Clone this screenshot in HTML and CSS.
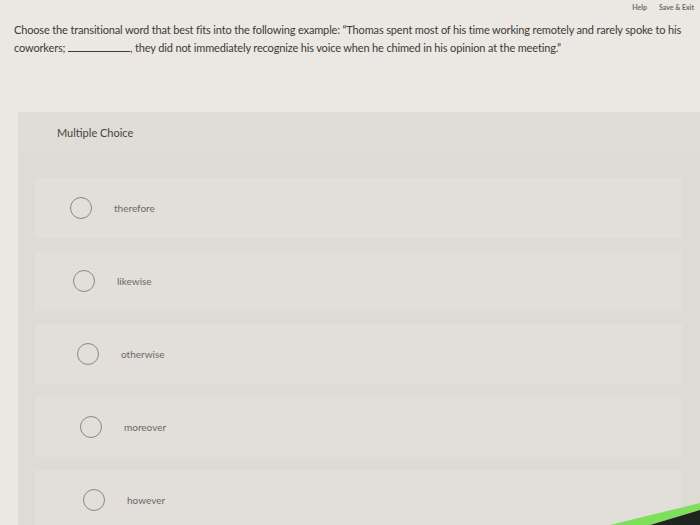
FILE: index.html
```html
<!DOCTYPE html>
<html>
<head>
	<title>Multiple Choice</title>
	<link rel="stylesheet" href="styles.css">
</head>
<body>
   <div class="topbar">
      <span class="link">Help</span>
      <span class="link">Save &amp; Exit</span>
   </div>
   <div class="question">
      Choose the transitional word that best fits into the following example: “Thomas spent most of his time working remotely and rarely spoke to his<br>
      coworkers; <span class="blank"></span>, they did not immediately recognize his voice when he chimed in his opinion at the meeting.”
   </div>
   <div class="card">
      <div class="card-head">Multiple Choice</div>
      <div class="options">
         <div class="option"><span class="radio"></span><span class="label">therefore</span></div>
         <div class="option"><span class="radio"></span><span class="label">likewise</span></div>
         <div class="option"><span class="radio"></span><span class="label">otherwise</span></div>
         <div class="option"><span class="radio"></span><span class="label">moreover</span></div>
         <div class="option"><span class="radio"></span><span class="label">however</span></div>
      </div>
   </div>
   <svg class="stripe" width="90" height="24" viewBox="0 0 90 24">
      <polygon points="0,24 90,2 90,9 40,24" fill="#7ee05a"/>
      <polygon points="40,24 90,9 90,24" fill="#1d2420"/>
   </svg>
</body>
</html>
```

FILE: styles.css
```css
body{
	margin: 0;
	background: #ebe7e2;
	font-family: Lato, "Open Sans", sans-serif;
	color: #3b3a39;
	height: 525px;
	overflow: hidden;
	position: relative;
}
.topbar{
	display: flex;
	justify-content: flex-end;
	gap: 12px;
	padding: 3px 6px 0 0;
	height: 12px;
	font-size: 7px;
}
.link{
	color: #6f6c69;
	font-weight: bold;
}
.question{
	padding: 6px 0 0 14px;
	font-size: 11px;
	line-height: 18px;
	letter-spacing: -0.15px;
	white-space: nowrap;
}
.blank{
	display: inline-block;
	width: 62px;
	border-bottom: 1px solid #3b3a39;
	vertical-align: baseline;
}
.card{
	margin: 55px 0 0 18px;
	background: #dedad4;
	height: 420px;
}
.card-head{
	height: 40px;
	padding-left: 39px;
	display: flex;
	align-items: center;
	font-size: 11px;
	color: #46443f;
	background: #e0dcd6;
}
.options{
	padding: 26px 18px 0 17px;
	display: flex;
	flex-direction: column;
	gap: 13px;
}
.option{
	height: 60px;
	display: flex;
	align-items: center;
	gap: 22px;
	padding-left: 35px;
	background: #e2dfda;
}
.option:nth-child(2){ padding-left: 38px; }
.option:nth-child(3){ padding-left: 42px; }
.option:nth-child(4){ padding-left: 45px; }
.option:nth-child(5){ padding-left: 48px; }
.radio{
	width: 20px;
	height: 20px;
	border: 1.5px solid #8a8884;
	border-radius: 50%;
	flex: none;
}
.label{
	font-size: 10px;
	color: #6b6966;
}
.stripe{
	position: absolute;
	right: 0;
	bottom: 0;
}
```
